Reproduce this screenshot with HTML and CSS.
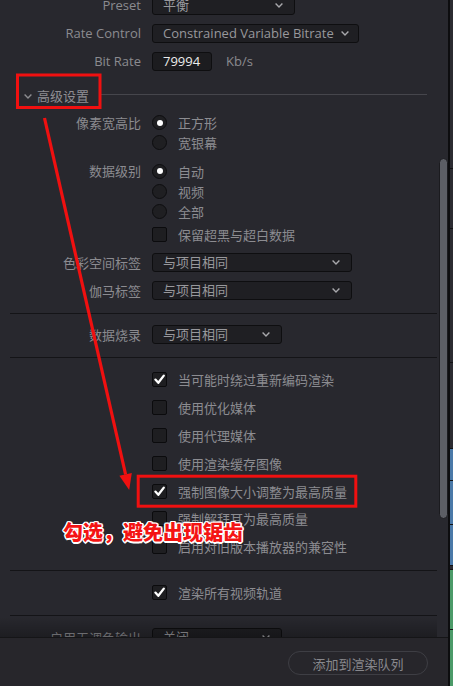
FILE: index.html
```html
<!DOCTYPE html>
<html lang="zh-CN">
<head>
<meta charset="utf-8">
<title>Render Settings</title>
<link rel="stylesheet" href="styles.css">
</head>
<body>
<div class="app">
  <div class="panel">
    <div class="scroll">
      <div class="content">
        <div class="row">
          <div class="label">Preset</div>
          <div class="select w-preset"><span>平衡</span><svg class="chev" width="8" height="5" viewBox="0 0 8 5"><polyline points="0.6,0.6 4,4 7.4,0.6"/></svg></div>
        </div>
        <div class="row">
          <div class="label">Rate Control</div>
          <div class="select w-rc"><span>Constrained Variable Bitrate</span><svg class="chev" width="8" height="5" viewBox="0 0 8 5"><polyline points="0.6,0.6 4,4 7.4,0.6"/></svg></div>
        </div>
        <div class="row">
          <div class="label">Bit Rate</div>
          <div class="input">79994</div>
          <div class="unit">Kb/s</div>
        </div>

        <div class="section">
          <svg class="chev sec-chev" width="8" height="5" viewBox="0 0 8 5"><polyline points="0.6,0.6 4,4 7.4,0.6"/></svg>
          <span class="sec-title">高级设置</span>
          <div class="sec-line"></div>
        </div>

        <div class="group g1">
          <div class="label">像素宽高比</div>
          <div class="opts">
            <div class="opt"><span class="radio on"></span><span>正方形</span></div>
            <div class="opt"><span class="radio"></span><span>宽银幕</span></div>
          </div>
        </div>
        <div class="group g2">
          <div class="label">数据级别</div>
          <div class="opts">
            <div class="opt"><span class="radio on"></span><span>自动</span></div>
            <div class="opt"><span class="radio"></span><span>视频</span></div>
            <div class="opt"><span class="radio"></span><span>全部</span></div>
          </div>
        </div>
        <div class="crow keep">
          <span class="box"></span><span>保留超黑与超白数据</span>
        </div>

        <div class="row r-color">
          <div class="label">色彩空间标签</div>
          <div class="select w-tag"><span>与项目相同</span><svg class="chev" width="8" height="5" viewBox="0 0 8 5"><polyline points="0.6,0.6 4,4 7.4,0.6"/></svg></div>
        </div>
        <div class="row">
          <div class="label">伽马标签</div>
          <div class="select w-tag"><span>与项目相同</span><svg class="chev" width="8" height="5" viewBox="0 0 8 5"><polyline points="0.6,0.6 4,4 7.4,0.6"/></svg></div>
        </div>

        <div class="divider d1"></div>
        <div class="row r-burn">
          <div class="label">数据烧录</div>
          <div class="select w-short"><span>与项目相同</span><svg class="chev" width="8" height="5" viewBox="0 0 8 5"><polyline points="0.6,0.6 4,4 7.4,0.6"/></svg></div>
        </div>
        <div class="divider d2"></div>

        <div class="checks">
          <div class="crow tall"><span class="box"><svg width="15" height="15" viewBox="0 0 15 15"><polyline points="3.4,7.6 6.3,10.8 11.8,3.6"/></svg></span><span>当可能时绕过重新编码渲染</span></div>
          <div class="crow tall"><span class="box"></span><span>使用优化媒体</span></div>
          <div class="crow tall"><span class="box"></span><span>使用代理媒体</span></div>
          <div class="crow tall"><span class="box"></span><span>使用渲染缓存图像</span></div>
          <div class="crow tall"><span class="box"><svg width="15" height="15" viewBox="0 0 15 15"><polyline points="3.4,7.6 6.3,10.8 11.8,3.6"/></svg></span><span>强制图像大小调整为最高质量</span></div>
          <div class="crow tall"><span class="box"></span><span>强制解拜耳为最高质量</span></div>
          <div class="crow tall"><span class="box"></span><span>启用对旧版本播放器的兼容性</span></div>
        </div>

        <div class="divider d3"></div>
        <div class="crow r-all"><span class="box"><svg width="15" height="15" viewBox="0 0 15 15"><polyline points="3.4,7.6 6.3,10.8 11.8,3.6"/></svg></span><span>渲染所有视频轨道</span></div>
        <div class="divider d4"></div>

        <div class="row r-last">
          <div class="label">启用无调色输出</div>
          <div class="select w-short"><span>关闭</span><svg class="chev" width="8" height="5" viewBox="0 0 8 5"><polyline points="0.6,0.6 4,4 7.4,0.6"/></svg></div>
        </div>
      </div>
      <div class="track"><div class="thumb"></div></div>
      <div class="fade"></div>
    </div>
    <div class="footer">
      <div class="btn">添加到渲染队列</div>
    </div>
  </div>
  <div class="side">
    <div class="seg s1"></div>
    <div class="seg s2"></div>
    <div class="seg s3"></div>
    <div class="seg s4"></div>
    <div class="seg blue b1"></div>
    <div class="seg blue b2"></div>
    <div class="seg blue b3"></div>
    <div class="seg gap"></div>
    <div class="seg green g-a"></div>
    <div class="seg green g-b"></div>
  </div>

  <svg class="annot" width="453" height="686" viewBox="0 0 453 686">
    <rect x="17.5" y="75" width="82.5" height="32.5" fill="none" stroke="#f01010" stroke-width="3"/>
    <rect x="138.2" y="476.2" width="217.6" height="30" fill="none" stroke="#f01010" stroke-width="3"/>
    <line x1="44.5" y1="118" x2="125.6" y2="474.5" stroke="#f01010" stroke-width="3.2"/>
    <polygon points="119.4,475.8 131.8,473 129.2,490" fill="#f01010"/>
  </svg>
  <div class="note">勾选，避免出现锯齿</div>
</div>
</body>
</html>
```

FILE: styles.css
```css
html, body {
  margin: 0;
  padding: 0;
}
body {
  background: #28282e;
  font-family: "Open Sans", "Noto Sans CJK SC", sans-serif;
  font-size: 13px;
  color: #8c8c91;
}
.app {
  position: relative;
  display: flex;
  width: 453px;
  height: 686px;
  overflow: hidden;
}
.panel {
  width: 448px;
  flex: none;
  display: flex;
  flex-direction: column;
  background: #28282e;
}
.scroll {
  position: relative;
  height: 637px;
  flex: none;
  display: flex;
  overflow: hidden;
}
.content {
  width: 439px;
  flex: none;
  margin-top: -9px;
  display: flex;
  flex-direction: column;
}
.track {
  width: 9px;
  flex: none;
  padding-top: 158px;
  box-sizing: border-box;
}
.thumb {
  width: 9px;
  height: 361px;
  box-sizing: border-box;
  background: #5c5e65;
  border: 1px solid #1b1b1f;
  border-radius: 5px;
}
.fade {
  position: absolute;
  left: 0;
  bottom: 0;
  width: 437px;
  height: 20px;
  background: linear-gradient(rgba(0,0,0,0), rgba(0,0,0,0.28));
}

/* rows */
.row {
  display: flex;
  align-items: center;
  height: 28px;
  flex: none;
}
.label {
  width: 141px;
  flex: none;
  margin-right: 11px;
  text-align: right;
  line-height: 20px;
  white-space: nowrap;
  color: #8b8b90;
}
.select {
  height: 19px;
  box-sizing: border-box;
  display: flex;
  align-items: center;
  padding: 0 11px 0 10px;
  background: #1f1f23;
  border: 1px solid #0e0e10;
  border-radius: 3px;
  color: #98989c;
  white-space: nowrap;
}
.select span {
  line-height: 17px;
}
.chev {
  margin-left: auto;
  flex: none;
}
.chev polyline {
  fill: none;
  stroke: #a8a8ac;
  stroke-width: 1.4;
}
.w-preset { width: 143px; }
.w-rc { width: 207px; }
.w-rc .chev { margin-left: 7px; }
.w-tag { width: 200px; }
.w-short { width: 130px; }
.input {
  width: 60px;
  height: 19px;
  box-sizing: border-box;
  padding-left: 10px;
  background: #1c1c1f;
  border: 1px solid #0e0e10;
  border-radius: 3px;
  color: #ececec;
  line-height: 17px;
}
.unit {
  margin-left: 14px;
  color: #8b8b90;
}

/* section header */
.section {
  display: flex;
  align-items: center;
  height: 20px;
  margin-top: 11px;
  padding-left: 24px;
  flex: none;
}
.sec-chev {
  margin-left: 0;
}
.sec-chev polyline {
  stroke: #8c8c90;
}
.sec-title {
  margin-left: 5px;
  color: #8e8e93;
  line-height: 20px;
}
.sec-line {
  flex: 1;
  height: 1px;
  margin: -3px 12px 0 11px;
  background: #46464c;
}

/* radio groups */
.group {
  display: flex;
  align-items: flex-start;
  flex: none;
}
.g1 { margin-top: 6.5px; }
.g2 { margin-top: 8.5px; }
.opts {
  display: flex;
  flex-direction: column;
}
.opt {
  display: flex;
  align-items: center;
  height: 20px;
  gap: 11px;
}
.radio {
  width: 15px;
  height: 15px;
  box-sizing: border-box;
  border-radius: 50%;
  background: #1f1f22;
  border: 1px solid #0d0d0f;
  display: flex;
  align-items: center;
  justify-content: center;
  flex: none;
}
.radio.on::after {
  content: "";
  width: 6px;
  height: 6px;
  border-radius: 50%;
  background: #ffffff;
}

/* checkbox rows */
.crow {
  display: flex;
  align-items: center;
  height: 20px;
  padding-left: 152px;
  gap: 11px;
  flex: none;
  white-space: nowrap;
}
.crow.tall { height: 27.8px; }
.keep { margin-top: 3.7px; }
.checks {
  display: flex;
  flex-direction: column;
  margin-top: 7.8px;
  flex: none;
}
.box {
  width: 15px;
  height: 15px;
  box-sizing: border-box;
  background: #1e1e21;
  border: 1px solid #0b0b0d;
  border-radius: 2px;
  flex: none;
  position: relative;
}
.box svg {
  position: absolute;
  left: -1px;
  top: -1px;
}
.box polyline {
  fill: none;
  stroke: #ffffff;
  stroke-width: 2.3;
  stroke-linecap: round;
  stroke-linejoin: round;
}
.r-color { margin-top: 4px; }
.r-burn { margin-top: 6.7px; }
.r-all { height: 28px; margin-top: 7.7px; }
.r-last { margin-top: 7.8px; }

.divider {
  height: 1px;
  margin-left: 10px;
  margin-right: 2px;
  background: #141417;
  flex: none;
}
.d1 { margin-top: 8.3px; }
.d2 { margin-top: 8.6px; }
.d3 { margin-top: 9.3px; }
.d4 { margin-top: 8.3px; }

/* footer */
.footer {
  flex: 1;
  display: flex;
  justify-content: flex-end;
  align-items: flex-start;
  padding: 13px 20px 0 0;
  border-top: 1px solid #151517;
  background: #27262b;
}
.btn {
  width: 140px;
  height: 24px;
  box-sizing: border-box;
  border: 1px solid #3e3e44;
  border-radius: 12px;
  display: flex;
  align-items: center;
  justify-content: center;
  color: #88888d;
}

/* right strip */
.side {
  width: 3px;
  flex: none;
  border-left: 2px solid #0d0d0f;
  display: flex;
  flex-direction: column;
  background: #2b2b31;
}
.seg { flex: none; border-bottom: 1px solid #121214; }
.s1 { height: 168px; }
.s2 { height: 59px; }
.s3 { height: 133px; }
.s4 { height: 85px; }
.blue { background: #4a79a8; }
.b1 { height: 31px; }
.b2 { height: 43px; }
.b3 { height: 40px; }
.gap { height: 3px; background: #2b2b31; }
.green { background: #4b9a68; }
.g-a { height: 59px; }
.g-b { height: 70px; border-bottom: none; }

/* annotations */
.annot {
  position: absolute;
  left: 0;
  top: 0;
  pointer-events: none;
}
.note {
  position: absolute;
  left: 63px;
  top: 518px;
  font-family: "Noto Sans CJK SC", sans-serif;
  font-size: 20px;
  font-weight: 900;
  line-height: 28px;
  color: #f41414;
  white-space: nowrap;
  text-shadow:
    1.5px 0 0 #fff, -1.5px 0 0 #fff, 0 1.5px 0 #fff, 0 -1.5px 0 #fff,
    1px 1px 0 #fff, -1px 1px 0 #fff, 1px -1px 0 #fff, -1px -1px 0 #fff;
}
```
